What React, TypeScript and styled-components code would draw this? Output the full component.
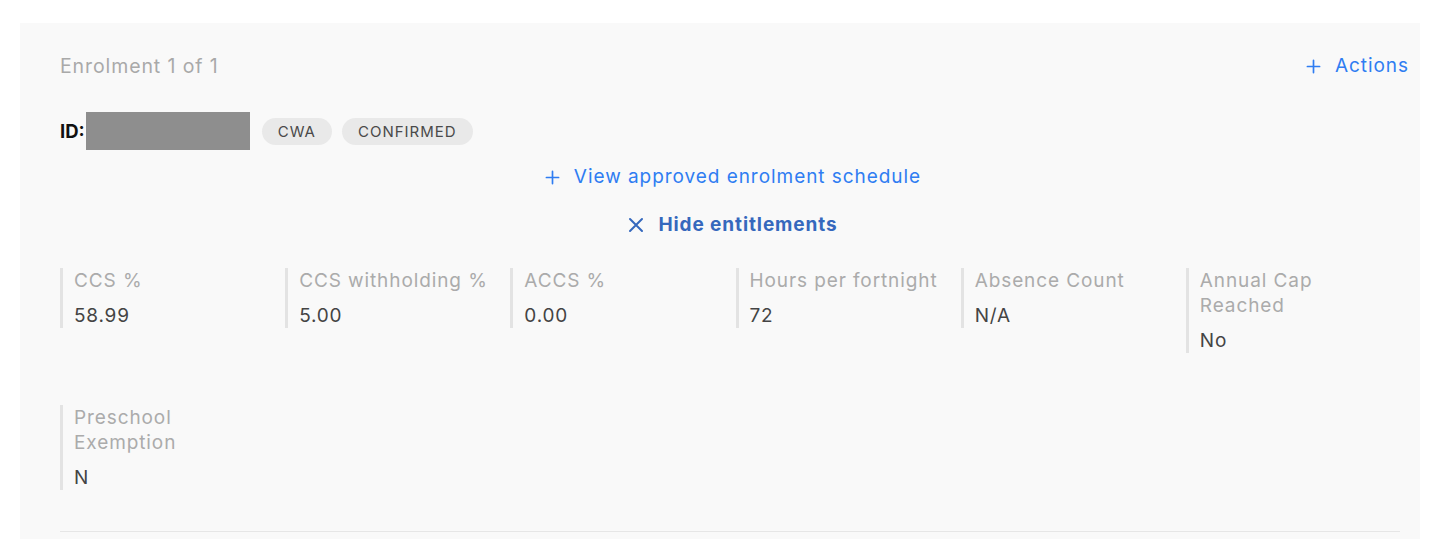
import React from 'react'
import styled, { createGlobalStyle } from 'styled-components'

const GlobalStyle = createGlobalStyle`
  body {
    margin: 0;
    background: #ffffff;
    font-family: Inter, "Noto Sans", "Liberation Sans", sans-serif;
  }
`

interface Entitlement {
  label: string
  value: string
}

const firstRow: Entitlement[] = [
  { label: 'CCS %', value: '58.99' },
  { label: 'CCS withholding %', value: '5.00' },
  { label: 'ACCS %', value: '0.00' },
  { label: 'Hours per fortnight', value: '72' },
  { label: 'Absence Count', value: 'N/A' },
  { label: 'Annual Cap\nReached', value: 'No' },
]

const secondRow: Entitlement[] = [
  { label: 'Preschool\nExemption', value: 'N' },
]

const PlusIcon = ({ size = 15 }: { size?: number }) => (
  <svg width={size} height={size} viewBox='0 0 16 16' fill='none'>
    <path d='M8 1.5v13M1.5 8h13' stroke='currentColor' strokeWidth='1.8' strokeLinecap='round' />
  </svg>
)

const CrossIcon = () => (
  <svg width={16} height={16} viewBox='0 0 16 16' fill='none'>
    <path d='M2 2l12 12M14 2L2 14' stroke='currentColor' strokeWidth='2' strokeLinecap='round' />
  </svg>
)

const App = () => (
  <>
    <GlobalStyle />
    <Panel>
      <Header>
        <Title>Enrolment 1 of 1</Title>
        <LinkButton>
          <PlusIcon />
          Actions
        </LinkButton>
      </Header>

      <IdRow>
        <IdLabel>ID:</IdLabel>
        <Redacted />
        <Pills>
          <Pill>CWA</Pill>
          <Pill>CONFIRMED</Pill>
        </Pills>
      </IdRow>

      <Centered>
        <LinkButton>
          <PlusIcon />
          View approved enrolment schedule
        </LinkButton>
      </Centered>

      <Centered>
        <LinkButton strong>
          <CrossIcon />
          Hide entitlements
        </LinkButton>
      </Centered>

      <Grid>
        {[firstRow, secondRow].map((row, i) => (
          <GridRow key={i}>
            {row.map((item) => (
              <Item key={item.label}>
                <Label>{item.label}</Label>
                <Value>{item.value}</Value>
              </Item>
            ))}
          </GridRow>
        ))}
      </Grid>

      <Divider />
    </Panel>
  </>
)

const Panel = styled.div`
  margin: 23px 0 0 20px;
  width: 1400px;
  box-sizing: border-box;
  padding: 29px 7px 7px 40px;
  background: #f9f9f9;
  display: flex;
  flex-direction: column;
`

const Header = styled.div`
  display: flex;
  justify-content: space-between;
  align-items: center;
  padding-right: 4px;
  height: 28px;
`

const Title = styled.div`
  font-size: 19.5px;
  color: #a9a9a9;
  letter-spacing: 0.9px;
`

const LinkButton = styled.div<{ strong?: boolean }>`
  display: inline-flex;
  align-items: center;
  gap: 14px;
  font-size: 19px;
  line-height: 26px;
  letter-spacing: ${({ strong }) => (strong ? '0.9px' : '0.95px')};
  font-weight: ${({ strong }) => (strong ? 700 : 400)};
  color: ${({ strong }) => (strong ? '#3568bd' : '#2f7df2')};
  cursor: pointer;
`

const IdRow = styled.div`
  display: flex;
  align-items: center;
  margin-top: 32px;
  height: 38px;
`

const IdLabel = styled.span`
  font-size: 18.5px;
  font-weight: 700;
  color: #111;
`

const Redacted = styled.div`
  width: 164px;
  height: 38px;
  background: #8e8e8e;
  margin-left: 1px;
`

const Pills = styled.div`
  display: flex;
  gap: 10px;
  margin-left: 12px;
`

const Pill = styled.span`
  display: inline-flex;
  align-items: center;
  height: 27px;
  padding: 0 16px;
  border-radius: 14px;
  background: #e9e9e9;
  color: #4a4a4a;
  font-size: 15px;
  letter-spacing: 1px;
`

const Centered = styled.div`
  display: flex;
  justify-content: center;
  margin-top: 14px;
  padding-right: 7px;

  & + & {
    margin-top: 22px;
  }
`

const Grid = styled.div`
  display: flex;
  flex-direction: column;
  gap: 52px;
  margin-top: 30px;
  margin-right: 2px;
`

const GridRow = styled.div`
  display: grid;
  grid-template-columns: repeat(6, 1fr);
  align-items: start;
`

const Item = styled.div`
  border-left: 3px solid #e3e3e3;
  padding-left: 11px;
  display: flex;
  flex-direction: column;
`

const Label = styled.div`
  font-size: 19px;
  line-height: 25px;
  color: #ababab;
  letter-spacing: 0.9px;
  white-space: pre-line;
`

const Value = styled.div`
  margin-top: 11px;
  font-size: 19px;
  line-height: 24px;
  color: #444;
  letter-spacing: 0.8px;
`

const Divider = styled.div`
  margin: 41px 13px 0 0;
  height: 1px;
  background: #e6e6e6;
`

export default App
